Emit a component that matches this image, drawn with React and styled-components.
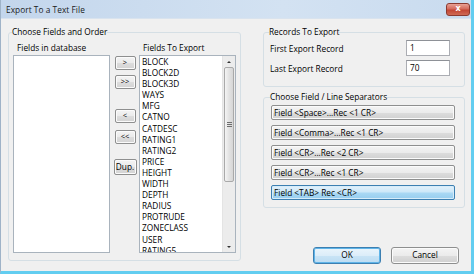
import React from "react";
import styled, { createGlobalStyle } from "styled-components";

const GlobalStyle = createGlobalStyle`
  html, body {
    margin: 0;
    padding: 0;
    background: #f0f0f0;
  }
  * {
    box-sizing: border-box;
  }
`;

const FONT = `"Open Sans", "Noto Sans", "Liberation Sans", sans-serif`;

const exportFields = [
  "BLOCK",
  "BLOCK2D",
  "BLOCK3D",
  "WAYS",
  "MFG",
  "CATNO",
  "CATDESC",
  "RATING1",
  "RATING2",
  "PRICE",
  "HEIGHT",
  "WIDTH",
  "DEPTH",
  "RADIUS",
  "PROTRUDE",
  "ZONECLASS",
  "USER",
  "RATING5"
];

const separators = [
  { label: "Field <Space>...Rec <1 CR>" },
  { label: "Field <Comma>...Rec <1 CR>" },
  { label: "Field <CR>...Rec <2 CR>" },
  { label: "Field <CR>...Rec <1 CR>" },
  { label: "Field <TAB> Rec <CR>", selected: true }
];

const moveButtons = [
  { label: ">", gap: 0 },
  { label: ">>", gap: 5 },
  { label: "<", gap: 20 },
  { label: "<<", gap: 7 },
  { label: "Dup.", gap: 15, wide: true }
];

const Window = styled.div`
  width: 474px;
  height: 274px;
  display: flex;
  flex-direction: column;
  background: #f0f0f0;
  border-left: 1px solid #9fb3c8;
  border-right: 3px solid #62cdf0;
  border-bottom: 3px solid #62cdf0;
  font-family: ${FONT};
  font-size: 8.3px;
  color: #000;
  overflow: hidden;
`;

const TitleBar = styled.div`
  height: 19px;
  flex: none;
  display: flex;
  align-items: center;
  padding: 0 1px 0 5px;
  background: linear-gradient(to right, #c3d6ec, #d3e2f2 60%, #c9dbef);
  border-bottom: 1px solid #d9e3ee;
`;

const Title = styled.span`
  color: #1a1a1a;
  letter-spacing: 0.05px;
`;

const CloseButton = styled.div`
  margin-left: auto;
  width: 24px;
  height: 13px;
  border: 1px solid #8b3a30;
  border-radius: 3px;
  background: linear-gradient(#e8a195, #d46a5c 45%, #c24634 55%, #cf6a55);
  display: flex;
  align-items: center;
  justify-content: center;
  color: #fff;
  font-family: "DejaVu Sans", sans-serif;
  font-size: 8px;
  font-weight: bold;
  line-height: 1;
`;

const Body = styled.div`
  flex: 1;
  display: flex;
  gap: 22px;
  padding: 8px 6px 0 7px;
`;

const Group = styled.fieldset`
  margin: 0;
  min-width: 0;
  border: 1px solid #d5dfe5;
  border-radius: 3px;
  padding: ${p => p.$pad};
`;

const Legend = styled.legend`
  padding: 0;
  margin-left: -1px;
  line-height: 10px;
`;

const FieldsGroup = styled(Group)`
  width: 233px;
  height: 234px;
`;

const ListsRow = styled.div`
  display: flex;
  height: 210px;
`;

const ListColumn = styled.div`
  width: 97px;
  display: flex;
  flex-direction: column;
`;

const ColumnLabel = styled.div`
  line-height: 10px;
  padding-left: 4px;
  margin-bottom: 2px;
`;

const ListBox = styled.div`
  flex: 1;
  display: flex;
  background: #fff;
  border: 1px solid #a9b3bd;
  overflow: hidden;
`;

const Items = styled.div`
  flex: 1;
  padding-left: 2px;
  overflow: hidden;
`;

const Item = styled.div`
  line-height: 11.1px;
  white-space: nowrap;
`;

const ScrollBar = styled.div`
  width: 13px;
  display: flex;
  flex-direction: column;
  background: #ececec;
  border-left: 1px solid #e4e4e4;
  padding: 0 1px 0 0;
`;

const ArrowBox = styled.div`
  height: 11px;
  flex: none;
  display: flex;
  align-items: center;
  justify-content: center;
`;

const Arrow = styled.div`
  width: 0;
  height: 0;
  border-left: 2px solid transparent;
  border-right: 2px solid transparent;
  ${p =>
    p.$dir === "up"
      ? "border-bottom: 2px solid #333;"
      : "border-top: 2px solid #333;"}
`;

const Track = styled.div`
  flex: 1;
`;

const Thumb = styled.div`
  height: 115px;
  margin: 0 0 0 1px;
  border: 1px solid #a9a9a9;
  border-radius: 2px;
  background: linear-gradient(to right, #f4f4f4, #e2e2e2 50%, #d6d6d6);
  display: flex;
  align-items: center;
  justify-content: center;
`;

const Grip = styled.div`
  width: 5px;
  height: 5px;
  background: repeating-linear-gradient(
    to bottom,
    #6d6d6d 0,
    #6d6d6d 1px,
    transparent 1px,
    transparent 2px
  );
`;

const MoveColumn = styled.div`
  width: 22px;
  margin: 0 3px 0 4px;
  padding-top: 13px;
  display: flex;
  flex-direction: column;
  align-items: center;
`;

const SmallButton = styled.div`
  width: ${p => (p.$wide ? "23px" : "21px")};
  height: ${p => (p.$wide ? "16px" : "14px")};
  margin-top: ${p => p.$gap}px;
  flex: none;
  border: 1px solid #8e8f8f;
  border-radius: 2px;
  background: linear-gradient(#f4f4f4, #ebebeb 50%, #dddddd 51%, #d3d3d3);
  box-shadow: inset 0 0 0 1px #fbfbfb;
  display: flex;
  align-items: center;
  justify-content: center;
  font-size: ${p => (p.$wide ? "8.3px" : "7.5px")};
  line-height: 1;
`;

const RightColumn = styled.div`
  width: 202px;
  display: flex;
  flex-direction: column;
`;

const RecordsGroup = styled(Group)`
  height: 60px;
`;

const RecordRow = styled.div`
  display: grid;
  grid-template-columns: 1fr 44px;
  align-items: center;
  height: 16px;
  padding-right: 14px;
  margin-top: ${p => p.$gap}px;
`;

const NumberInput = styled.div`
  height: 16px;
  background: #fff;
  border: 1px solid #abadb3;
  border-top-color: #8e9197;
  padding: 1px 0 0 3px;
  line-height: 12px;
`;

const SeparatorGroup = styled(Group)`
  margin-top: 5px;
  height: 116px;
`;

const SeparatorList = styled.div`
  display: flex;
  flex-direction: column;
  gap: 5px;
`;

const SeparatorButton = styled.div`
  height: 15px;
  border: 1px solid ${p => (p.$selected ? "#3c7fb1" : "#8e8f8f")};
  border-radius: 2px;
  background: ${p =>
    p.$selected
      ? "linear-gradient(#e3f1fb, #cde8f9 45%, #a9d8f4 55%, #96cdef)"
      : "linear-gradient(#f4f4f4, #ebebeb 50%, #dddddd 51%, #d0d0d0)"};
  box-shadow: inset 0 0 0 1px ${p => (p.$selected ? "#d6ecfa" : "#fbfbfb")};
  padding-left: 2px;
  line-height: 13px;
  white-space: nowrap;
`;

const Footer = styled.div`
  margin-top: auto;
  display: flex;
  justify-content: flex-end;
  gap: 10px;
  padding: 0 6px 7px 0;
`;

const DialogButton = styled.div`
  width: 68px;
  height: 17px;
  border: 1px solid ${p => (p.$default ? "#3c7fb1" : "#8e8f8f")};
  border-radius: 3px;
  background: ${p =>
    p.$default
      ? "linear-gradient(#eaf5fc, #dcedf9 50%, #c9e4f6 51%, #bcdcf2)"
      : "linear-gradient(#f4f4f4, #ebebeb 50%, #dddddd 51%, #d0d0d0)"};
  box-shadow: inset 0 0 0 1px ${p => (p.$default ? "#5fb4e8" : "#fbfbfb")};
  display: flex;
  align-items: center;
  justify-content: center;
  line-height: 1;
`;

export default function App() {
  return (
    <>
      <GlobalStyle />
      <Window>
        <TitleBar>
          <Title>Export To a Text File</Title>
          <CloseButton>x</CloseButton>
        </TitleBar>
        <Body>
          <FieldsGroup $pad="6px 4px 0 4px">
            <Legend>Choose Fields and Order</Legend>
            <ListsRow>
              <ListColumn>
                <ColumnLabel>Fields in database</ColumnLabel>
                <ListBox />
              </ListColumn>
              <MoveColumn>
                {moveButtons.map(b => (
                  <SmallButton key={b.label} $gap={b.gap} $wide={b.wide}>
                    {b.label}
                  </SmallButton>
                ))}
              </MoveColumn>
              <ListColumn>
                <ColumnLabel>Fields To Export</ColumnLabel>
                <ListBox>
                  <Items>
                    {exportFields.map(f => (
                      <Item key={f}>{f}</Item>
                    ))}
                  </Items>
                  <ScrollBar>
                    <ArrowBox>
                      <Arrow $dir="up" />
                    </ArrowBox>
                    <Track>
                      <Thumb>
                        <Grip />
                      </Thumb>
                    </Track>
                    <ArrowBox>
                      <Arrow $dir="down" />
                    </ArrowBox>
                  </ScrollBar>
                </ListBox>
              </ListColumn>
            </ListsRow>
          </FieldsGroup>
          <RightColumn>
            <RecordsGroup $pad="3px 0 0 6px">
              <Legend>Records To Export</Legend>
              <RecordRow $gap={0}>
                <span>First Export Record</span>
                <NumberInput>1</NumberInput>
              </RecordRow>
              <RecordRow $gap={4}>
                <span>Last Export Record</span>
                <NumberInput>70</NumberInput>
              </RecordRow>
            </RecordsGroup>
            <SeparatorGroup $pad="3px 9px 0 7px">
              <Legend>Choose Field / Line Separators</Legend>
              <SeparatorList>
                {separators.map(s => (
                  <SeparatorButton key={s.label} $selected={s.selected}>
                    {s.label}
                  </SeparatorButton>
                ))}
              </SeparatorList>
            </SeparatorGroup>
            <Footer>
              <DialogButton $default>OK</DialogButton>
              <DialogButton>Cancel</DialogButton>
            </Footer>
          </RightColumn>
        </Body>
      </Window>
    </>
  );
}
